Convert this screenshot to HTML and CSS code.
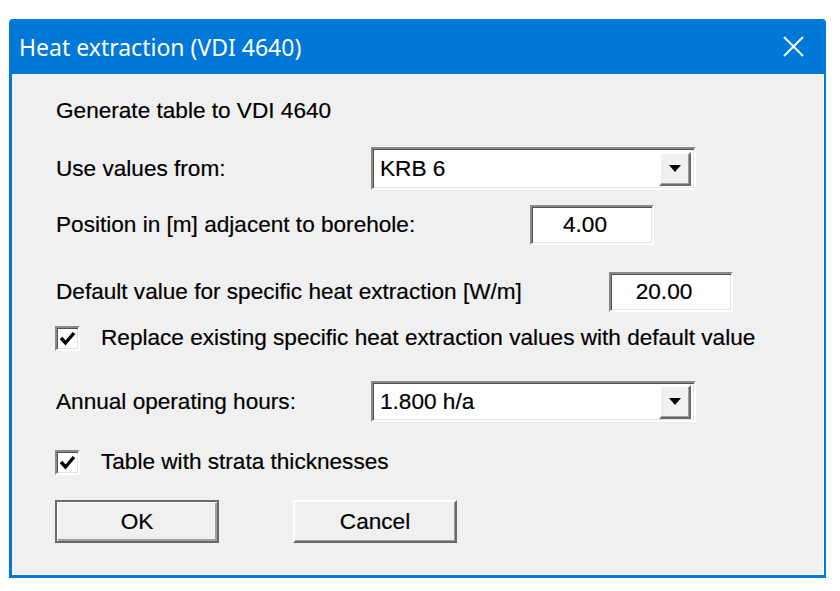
FILE: index.html
```html
<!DOCTYPE html>
<html lang="en">
<head>
    <meta charset="UTF-8">
    <title>Heat extraction (VDI 4640)</title>
    <link rel="stylesheet" href="styles.css">
</head>
<body>

<div class="dialog">
    <div class="titlebar">
        <span class="title">Heat extraction (VDI 4640)</span>
        <span class="close">
            <svg width="21" height="21" viewBox="0 0 21 21">
                <path d="M1 1 L20 20 M20 1 L1 20" stroke="#fff" stroke-width="2" fill="none"/>
            </svg>
        </span>
    </div>

    <div class="client">
        <div class="row row-intro">Generate table to VDI 4640</div>

        <!-- Source -->
        <div class="row row-source">
            <span class="label label-combo">Use values from:</span>
            <div class="combo">
                <span class="combo-value">KRB 6</span>
                <span class="combo-btn">
                    <svg width="12" height="8" viewBox="0 0 12 8"><path d="M0 0 H12 L6 7 Z" fill="#000"/></svg>
                </span>
            </div>
        </div>

        <!-- Position -->
        <div class="row row-position">
            <span class="label label-position">Position in [m] adjacent to borehole:</span>
            <div class="edit">4.00</div>
        </div>

        <!-- Default value -->
        <div class="row row-default">
            <span class="label label-default">Default value for specific heat extraction [W/m]</span>
            <div class="edit">20.00</div>
        </div>

        <div class="row row-replace">
            <span class="checkbox">
                <svg width="21" height="21" viewBox="0 0 21 21"><path d="M4 10 L8.5 15 L17 5" stroke="#000" stroke-width="3.4" fill="none"/></svg>
            </span>
            <span class="check-text">Replace existing specific heat extraction values with default value</span>
        </div>

        <!-- Operating hours -->
        <div class="row row-hours">
            <span class="label label-combo">Annual operating hours:</span>
            <div class="combo combo-short">
                <span class="combo-value">1.800 h/a</span>
                <span class="combo-btn">
                    <svg width="12" height="8" viewBox="0 0 12 8"><path d="M0 0 H12 L6 7 Z" fill="#000"/></svg>
                </span>
            </div>
        </div>

        <div class="row row-strata">
            <span class="checkbox">
                <svg width="21" height="21" viewBox="0 0 21 21"><path d="M4 10 L8.5 15 L17 5" stroke="#000" stroke-width="3.4" fill="none"/></svg>
            </span>
            <span class="check-text">Table with strata thicknesses</span>
        </div>

        <!-- Buttons -->
        <div class="row row-buttons">
            <button class="btn btn-default">OK</button>
            <button class="btn">Cancel</button>
        </div>
    </div>
</div>

</body>
</html>
```

FILE: styles.css
```css
/* Page */
body {
    margin: 0;
    background-color: #fff;
    font-family: "Liberation Sans", Arial, sans-serif;
    font-size: 22.6px;
    color: #000;
}

/* Window frame */
.dialog {
    margin: 19px 0 0 9px;
    width: 817px;
    height: 559px;
    display: flex;
    flex-direction: column;
    background-color: #0078d7;
    border-radius: 4px 4px 0 0;
    padding: 0 2px 3px 3px;
    box-sizing: border-box;
}

.titlebar {
    height: 55px;
    display: flex;
    align-items: center;
    justify-content: space-between;
    padding-left: 7px;
    flex-shrink: 0;
}

.title {
    font-family: "Noto Sans", "Open Sans", sans-serif;
    font-size: 23px;
    color: #fff;
}

.close {
    display: flex;
    margin-right: 20px;
}

.client {
    flex: 1;
    background-color: #f0f0f0;
    padding: 21px 0 0 44px;
    border-right: 1px solid #fff;
    border-bottom: 1px solid #fff;
    -webkit-text-stroke: 0.2px #000;
}

/* Rows */
.row {
    display: flex;
    align-items: center;
}

.row-intro { height: 32px; }
.row-source { margin-top: 20px; }
.row-position { margin-top: 15px; }
.row-default { margin-top: 27px; }
.row-replace { margin-top: 13px; }
.row-hours { margin-top: 30px; }
.row-strata { margin-top: 27px; }
.row-buttons { margin-top: 25px; }

.label-combo { width: 315px; }
.label-position { width: 474px; }
.label-default { width: 553px; }

/* Sunken controls */
.combo,
.edit,
.checkbox {
    box-sizing: border-box;
    background-color: #fff;
    border: 2px solid;
    border-color: #8a8a8a #fff #fff #8a8a8a;
    box-shadow: inset 1px 1px 0 #505050, inset -1px -1px 0 #e3e3e3;
}

.combo {
    width: 325px;
    height: 43px;
    display: flex;
    align-items: center;
    padding: 0 3px 0 7px;
}

.combo-short {
    height: 41px;
}

.combo-value {
    flex: 1;
}

.combo-btn {
    width: 32px;
    height: 34px;
    box-sizing: border-box;
    display: flex;
    align-items: center;
    justify-content: center;
    background-color: #f0f0f0;
    border: 2px solid;
    border-color: #fff #696969 #696969 #fff;
    box-shadow: inset -1px -1px 0 #a0a0a0;
}

.edit {
    width: 124px;
    height: 40px;
    line-height: 36px;
    text-align: center;
    padding-right: 14px;
}

.checkbox {
    width: 25px;
    height: 25px;
    display: flex;
    align-items: center;
    justify-content: center;
    margin-left: -1px;
}

.check-text {
    margin-left: 21px;
}

/* Push buttons */
.btn {
    font-family: "Liberation Sans", Arial, sans-serif;
    font-size: 22.6px;
    -webkit-text-stroke: 0.2px #000;
    width: 164px;
    height: 43px;
    margin: 0 75px 0 -1px;
    background-color: #f0f0f0;
    border: 2px solid;
    border-color: #fff #696969 #696969 #fff;
    box-shadow: inset -1px -1px 0 #a0a0a0;
    padding: 0;
    color: #000;
}

.btn-default {
    border-color: #696969;
    box-shadow: inset 1px 1px 0 #fff, inset -2px -2px 0 #a0a0a0;
}
```
